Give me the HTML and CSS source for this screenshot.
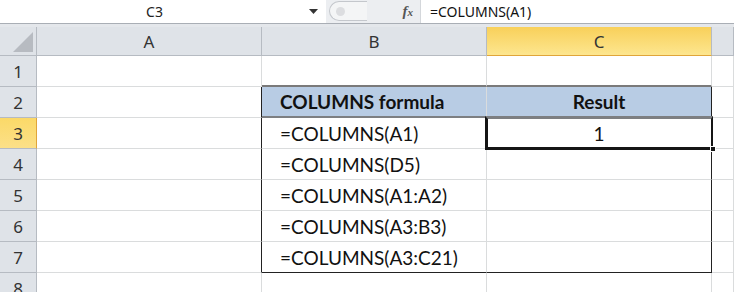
FILE: index.html
```html
<!DOCTYPE html>
<html lang="en">
<head>
  <meta charset="UTF-8" />
  <title>COLUMNS formula</title>
  <link rel="stylesheet" href="styles.css">
</head>
<body>

  <div class="formula-bar">
    <div class="name-box">
      <span class="name">C3</span>
      <svg class="drop" width="9" height="5" viewBox="0 0 9 5"><path d="M0 0h9L4.5 5z" fill="#333"/></svg>
    </div>
    <div class="splitter"><span class="knob"></span></div>
    <div class="fx-zone"><span class="fx">f<span class="x">x</span></span></div>
    <div class="formula">=COLUMNS(A1)</div>
  </div>
  <div class="strip"></div>

  <div class="sheet">
    <div class="corner"><span class="tri"></span></div>
    <div class="col-head">A</div>
    <div class="col-head">B</div>
    <div class="col-head active">C</div>
    <div class="col-head"></div>

    <div class="row-head">1</div>
    <div class="cell"></div>
    <div class="cell above"></div>
    <div class="cell above"></div>
    <div class="cell"></div>

    <div class="row-head">2</div>
    <div class="cell lead"></div>
    <div class="cell head">COLUMNS formula</div>
    <div class="cell head center edge">Result</div>
    <div class="cell"></div>

    <div class="row-head active">3</div>
    <div class="cell lead"></div>
    <div class="cell text">=COLUMNS(A1)</div>
    <div class="cell text center edge">1</div>
    <div class="cell"></div>

    <div class="row-head">4</div>
    <div class="cell lead"></div>
    <div class="cell text">=COLUMNS(D5)</div>
    <div class="cell edge"></div>
    <div class="cell"></div>

    <div class="row-head">5</div>
    <div class="cell lead"></div>
    <div class="cell text">=COLUMNS(A1:A2)</div>
    <div class="cell edge"></div>
    <div class="cell"></div>

    <div class="row-head">6</div>
    <div class="cell lead"></div>
    <div class="cell text">=COLUMNS(A3:B3)</div>
    <div class="cell edge"></div>
    <div class="cell"></div>

    <div class="row-head">7</div>
    <div class="cell lead"></div>
    <div class="cell text last">=COLUMNS(A3:C21)</div>
    <div class="cell edge last"></div>
    <div class="cell"></div>

    <div class="row-head">8</div>
    <div class="cell"></div>
    <div class="cell"></div>
    <div class="cell"></div>
    <div class="cell"></div>

    <div class="selection"><span class="handle"></span></div>
  </div>

</body>
</html>
```

FILE: styles.css
```css
* {
  box-sizing: border-box;
}
body {
  margin: 0;
  width: 734px;
  height: 292px;
  overflow: hidden;
  background: #fff;
  font-family: "Noto Sans", sans-serif;
}

/* formula bar */
.formula-bar {
  display: flex;
  height: 24px;
  background: #eceef1;
  border-bottom: 1px solid #a9aeb5;
}
.name-box {
  width: 326px;
  background: #fff;
  display: flex;
  align-items: center;
}
.name {
  flex: 1;
  text-align: center;
  font-size: 14px;
  color: #222;
}
.drop {
  margin-right: 8px;
}
.splitter {
  width: 41px;
  padding: 1px 0 2px 3px;
}
.knob {
  display: block;
  height: 100%;
  border: 1px solid #c4c7cc;
  border-right: none;
  border-radius: 10px 0 0 10px;
  background: #f4f5f6;
  position: relative;
}
.knob::after {
  content: "";
  position: absolute;
  left: 6px;
  top: 5px;
  width: 9px;
  height: 9px;
  border-radius: 50%;
  background: #dcdde0;
}
.fx-zone {
  width: 54px;
  display: flex;
  align-items: center;
  justify-content: flex-end;
  padding-right: 7px;
  border-right: 1px solid #d4d7db;
}
.fx {
  font-family: "Liberation Serif", serif;
  font-style: italic;
  font-weight: bold;
  font-size: 15px;
  color: #555;
}
.fx .x {
  font-size: 11px;
}
.formula {
  flex: 1;
  background: #fff;
  padding-left: 9px;
  display: flex;
  align-items: center;
  font-size: 14px;
  color: #111;
}
.strip {
  height: 3px;
  background: #e4e7eb;
}

/* sheet grid */
.sheet {
  position: relative;
  display: grid;
  grid-template-columns: 37px 225px 225px 225px 1fr;
  grid-template-rows: 29px repeat(8, 31px);
}
.corner,
.col-head,
.row-head {
  background: #dfe3e8;
  border-right: 1px solid #b6bbc2;
  border-bottom: 1px solid #b6bbc2;
  color: #333;
  font-size: 17px;
  display: flex;
  align-items: center;
  justify-content: center;
}
.corner {
  position: relative;
}
.tri {
  position: absolute;
  right: 3px;
  bottom: 3px;
  width: 0;
  height: 0;
  border-left: 20px solid transparent;
  border-bottom: 20px solid #b7bbc1;
}
.col-head.active {
  background: linear-gradient(#f8d05a, #fde68f);
  border-bottom-color: #e0a53a;
}
.row-head.active {
  background: linear-gradient(#fbd968, #fce088);
  border-right-color: #e0a53a;
}

.cell {
  border-right: 1px solid #dadcdd;
  border-bottom: 1px solid #dadcdd;
  font-family: "Lato", sans-serif;
  font-size: 19px;
  color: #111;
  display: flex;
  align-items: flex-end;
  padding-bottom: 3px;
}
.cell.above {
  border-bottom: 2px solid #7a7a7a;
}
.cell.lead {
  border-right-color: #222;
}
.cell.edge {
  border-right-color: #222;
}
.cell.last {
  border-bottom-color: #222;
}
.cell.head {
  background: #b8cce4;
  font-weight: bold;
  border-bottom: 2px solid #7d7f82;
  padding-left: 18px;
}
.cell.text {
  padding-left: 18px;
}
.cell.center {
  justify-content: center;
  padding-left: 0;
}

/* active cell outline */
.selection {
  position: absolute;
  left: 485px;
  top: 89px;
  width: 228px;
  height: 34px;
  border: 3px solid #151515;
  border-top-color: #7d7f82;
  border-right-width: 2px;
}
.handle {
  position: absolute;
  right: -5px;
  bottom: -5px;
  width: 6px;
  height: 6px;
  background: #151515;
  border: 1px solid #fff;
}
```
